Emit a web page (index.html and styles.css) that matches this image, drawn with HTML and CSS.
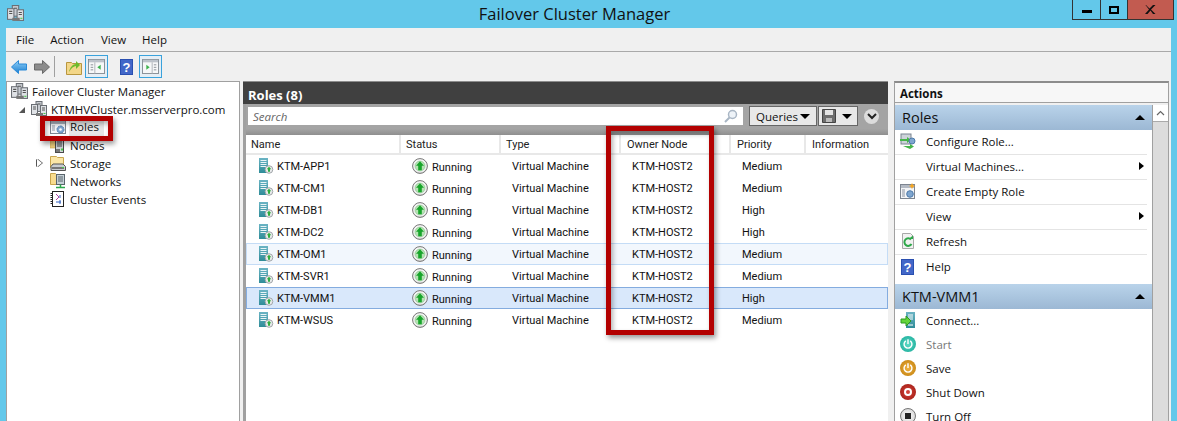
FILE: index.html
```html
<!DOCTYPE html>
<html lang="en">
<head>
<meta charset="utf-8">
<title>Failover Cluster Manager</title>
<link rel="stylesheet" href="styles.css">
</head>
<body>
<svg class="defs" width="0" height="0" aria-hidden="true">
  <defs>
    <linearGradient id="gb" x1="0" y1="0" x2="0" y2="1"><stop offset="0" stop-color="#8fd0f8"/><stop offset="1" stop-color="#1c7fd0"/></linearGradient>
    <linearGradient id="gs" x1="0" y1="0" x2="0" y2="1"><stop offset="0" stop-color="#6bb4c4"/><stop offset="1" stop-color="#2f8c98"/></linearGradient>
    <radialGradient id="gg" cx=".5" cy=".4" r=".7"><stop offset="0" stop-color="#fff"/><stop offset=".7" stop-color="#f2f2f2"/><stop offset="1" stop-color="#a0a0a0"/></radialGradient>
    <symbol id="cluster" viewBox="0 0 16 16">
      <rect x="5" y="0.5" width="6" height="10" fill="#c8ccd2" stroke="#6a6e74"/>
      <rect x="0.5" y="3.5" width="6" height="10" fill="#dfe2e6" stroke="#6a6e74"/>
      <rect x="9.5" y="4.5" width="6" height="10" fill="#dfe2e6" stroke="#6a6e74"/>
      <path d="M2 6h3M2 8h3M11 7h3M11 9h3M6.500 3h3" stroke="#555"/>
      <rect x="5" y="12" width="7" height="3" fill="#777"/>
      <rect x="12.500" y="12" width="2" height="1" fill="#4c4"/>
    </symbol>
    <symbol id="roles" viewBox="0 0 16 16">
      <rect x="0.500" y="1.500" width="15" height="13" fill="#f4f5f7" stroke="#7d8590"/>
      <rect x="1" y="2" width="14" height="3" fill="#aab0ba"/>
      <path d="M2 7h3M2 9h3M2 11h3" stroke="#8a93a0"/>
      <circle cx="10.500" cy="10.500" r="3.500" fill="#7fa6cf" stroke="#4d7aaa" stroke-dasharray="2 .6"/>
      <circle cx="10.500" cy="10.500" r="1.300" fill="#fff"/>
    </symbol>
    <symbol id="nodes" viewBox="0 0 16 16">
      <path d="M0 1h6l1 1h5v9H0z" fill="#f0cf7c" stroke="#c9a64e" stroke-width=".6"/>
      <rect x="5.500" y="2.500" width="8" height="13" fill="#cfd3d8" stroke="#4a4a4a"/>
      <path d="M7 5h5M7 7h5M7 9h5" stroke="#4a4a4a"/>
      <rect x="11" y="11.500" width="2" height="2" fill="#4c4"/>
      <rect x="6" y="12" width="4" height="3" fill="#777"/>
    </symbol>
    <symbol id="storage" viewBox="0 0 16 16">
      <path d="M.5 1.500h6l1 1h6v10H.5z" fill="#fbe6a6" stroke="#c9a64e"/>
      <path d="M3 9h10l2.500 2.500v4H1v-4z" fill="#c8ccd0" stroke="#555"/>
      <rect x="2" y="12" width="12" height="2" fill="#777"/>
      <rect x="12" y="12" width="2" height="1" fill="#4c4"/>
    </symbol>
    <symbol id="networks" viewBox="0 0 16 16">
      <path d="M.5 .5h5l1 1h8v10H.5z" fill="#f8dc8e" stroke="#c9a64e"/>
      <rect x="6.500" y="1.500" width="8" height="10" fill="#c5d0d6" stroke="#59646c"/>
      <path d="M8 4h5M8 6h5M8 8h5" stroke="#59646c"/>
      <path d="M10.500 11.500v3M6 14.500h9" stroke="#2da84c" stroke-width="1.500"/>
    </symbol>
    <symbol id="events" viewBox="0 0 16 16">
      <rect x="2.500" y="0.500" width="11" height="15" fill="#fff" stroke="#222"/>
      <path d="M1.500 2v12" stroke="#222" stroke-dasharray="1 1" stroke-width="2"/>
      <path d="M6 3l3 3-3 3" fill="none" stroke="#b040a0"/>
      <path d="M10 4v3M6 11h5M10 9v4" stroke="#3060c0"/>
    </symbol>
    <symbol id="vm" viewBox="0 0 16 16">
      <rect x="1" y="0" width="9" height="15" fill="url(#gs)"/>
      <path d="M2.500 2.500h6M2.500 4.500h6M2.500 6.500h6M2.500 8.500h6" stroke="#e8f4f6"/>
      <circle cx="11" cy="11.500" r="3.800" fill="#e8eaec" stroke="#a2a6aa"/>
      <path d="M11 8.800l2.300 2.500h-1.300v2.500h-2v-2.500h-1.300z" fill="#2fae3f"/>
    </symbol>
    <symbol id="running" viewBox="0 0 16 16">
      <circle cx="8" cy="8" r="7.400" fill="url(#gg)" stroke="#777"/>
      <circle cx="8" cy="8" r="5" fill="#b6e2b4" stroke="#79b97e" stroke-width=".5"/>
      <path d="M8 3.200L12 7.800H9.800V12.200H6.200V7.800H4z" fill="#18a52b"/>
    </symbol>
    <symbol id="configure" viewBox="0 0 16 16">
      <rect x="1" y="1" width="10" height="10" fill="#cdd3da" stroke="#7a8591"/>
      <path d="M0 6h7V4l4 3-4 3V8H0z" fill="#46b54a"/>
      <path d="M3 13H10V11l4 2.500-4 2.500" fill="#46b54a"/>
      <circle cx="12" cy="8" r="3" fill="#7fa6cf" stroke="#4d7aaa"/>
    </symbol>
    <symbol id="create" viewBox="0 0 16 16">
      <rect x="0.500" y="1.500" width="14" height="14" fill="#f4f5f7" stroke="#7d8590"/>
      <rect x="1" y="2" width="13" height="3" fill="#b4bac4"/>
      <path d="M2 7h3M2 9h3M2 11h3M2 13h3" stroke="#8a93a0"/>
      <circle cx="10" cy="11" r="3.300" fill="#7fa6cf" stroke="#4d7aaa"/>
      <path d="M12 0l1 2 2 1-2 1-1 2-1-2-2-1 2-1z" fill="#f5a623"/>
    </symbol>
    <symbol id="refresh" viewBox="0 0 16 16">
      <path d="M2.500 .5h8l3 3v12h-11z" fill="#f2f2f2" stroke="#a8a8a8"/>
      <path d="M11.500 11A3.800 3.800 0 1 1 11 6.500" fill="none" stroke="#2ea84a" stroke-width="2"/>
      <path d="M8.500 6h4.500v-3.500z" fill="#2ea84a"/>
    </symbol>
    <symbol id="help" viewBox="0 0 14 16">
      <rect width="13" height="16" fill="#2a4fb0"/>
      <rect x="1" y="1" width="11" height="14" fill="#4267c8"/>
      <text x="6.500" y="13" text-anchor="middle" class="helpmark">?</text>
    </symbol>
    <symbol id="connect" viewBox="0 0 16 16">
      <rect x="6" y="0" width="9" height="16" fill="url(#gs)"/>
      <path d="M8 3h5M8 5h5M8 7h5M8 13h5" stroke="#fff"/>
      <path d="M1 7h5V4l5 5-5 5v-3H1z" fill="#63d43a" stroke="#2c9a20"/>
    </symbol>
    <symbol id="power" viewBox="0 0 16 16">
      <path d="M5.500 4.500a4.500 4.500 0 1 0 5 0M8 2.500v5.500" fill="none" stroke="#fff" stroke-width="1.600"/>
    </symbol>
  </defs>
</svg>

<header class="titlebar">
  <svg class="app-icon"><use href="#cluster"/></svg>
  <h1 class="title">Failover Cluster Manager</h1>
  <div class="controls">
    <div class="ctl ctl-min"><span class="min-glyph"></span></div>
    <div class="ctl ctl-max"><span class="max-glyph"></span></div>
    <div class="ctl ctl-close">
      <svg width="11" height="9" viewBox="0 0 11 9"><path d="M1 0l3.500 3.500L8 0h2.500L6 4.500 10.500 9H8L5.500 5.500 2.500 9H0L4 4.500 .5 0z" fill="#111"/></svg>
    </div>
  </div>
</header>

<div class="window">
  <nav class="menubar">
    <span class="menu menu-file">File</span>
    <span class="menu menu-action">Action</span>
    <span class="menu menu-view">View</span>
    <span class="menu">Help</span>
  </nav>

  <div class="toolbar">
    <svg class="tool-arrow" viewBox="0 0 16 14"><path d="M.5 7L7.500.5v3.500h8v6h-8v3.500z" fill="url(#gb)" stroke="#2a8ad8"/></svg>
    <svg class="tool-arrow arrow-gap" viewBox="0 0 16 14"><path d="M15.500 7L8.500.5v3.500h-8v6h8v3.500z" fill="#8c8c8c" stroke="#6a6a6a"/></svg>
    <span class="tool-sep"></span>
    <svg class="tool-up" viewBox="0 0 16 16"><path d="M.5 3.500h5l1 1h9v11H.5z" fill="#f3d688" stroke="#b8963e"/><path d="M3 13C4 8 7 5 10 5V2l4 4-4 4V7C8 7 5 9 3 13z" fill="#6dbb2c"/></svg>
    <span class="tool-btn">
      <svg class="pane" viewBox="0 0 20 18"><rect x=".5" y=".5" width="19" height="17" fill="#f6f7f8" stroke="#7a8088"/><rect x="1" y="1" width="18" height="3" fill="#bcc2ca"/><path d="M3 7h3M3 10h3M3 13h3" stroke="#7a8088"/><path d="M8 4v14" stroke="#a4a8ae"/><path d="M15 7v6l-4-3z" fill="#3fb24f"/></svg>
    </span>
    <svg class="tool-help"><use href="#help"/></svg>
    <span class="tool-btn">
      <svg class="pane" viewBox="0 0 20 18"><rect x=".5" y=".5" width="19" height="17" fill="#f6f7f8" stroke="#7a8088"/><rect x="1" y="1" width="18" height="3" fill="#bcc2ca"/><path d="M14 7h3M14 10h3M14 13h3" stroke="#7a8088"/><path d="M12 4v14" stroke="#a4a8ae"/><path d="M5 7v6l4-3z" fill="#3fb24f"/></svg>
    </span>
  </div>

  <div class="panes">
    <aside class="tree">
      <div class="node level0"><svg class="ticon big"><use href="#cluster"/></svg><span>Failover Cluster Manager</span></div>
      <div class="node level1"><i class="exp exp-open"></i><svg class="ticon"><use href="#cluster"/></svg><span>KTMHVCluster.msserverpro.com</span></div>
      <div class="node level2 node-selected"><svg class="ticon"><use href="#roles"/></svg><span>Roles</span></div>
      <div class="node level2"><svg class="ticon"><use href="#nodes"/></svg><span>Nodes</span></div>
      <div class="node level2 has-exp"><i class="exp exp-closed"></i><svg class="ticon"><use href="#storage"/></svg><span>Storage</span></div>
      <div class="node level2"><svg class="ticon"><use href="#networks"/></svg><span>Networks</span></div>
      <div class="node level2"><svg class="ticon"><use href="#events"/></svg><span>Cluster Events</span></div>
    </aside>

    <main class="center">
      <h2 class="center-title">Roles (8)</h2>
      <div class="filter">
        <div class="search">
          <span class="search-text">Search</span>
          <svg class="lens" viewBox="0 0 14 14"><circle cx="8.500" cy="5.500" r="4" fill="#eef3f8" stroke="#a9b6c4" stroke-width="1.500"/><path d="M5.500 8.500L1 13" stroke="#a9b6c4" stroke-width="2"/></svg>
        </div>
        <div class="fbtn queries">Queries<i class="down"></i></div>
        <div class="fbtn save">
          <svg class="disk" viewBox="0 0 14 14"><path d="M.5.5h13v13H.5z" fill="#6d6d6d" stroke="#444"/><rect x="3" y="1" width="8" height="5" fill="#e4e4e4"/><rect x="4" y="9" width="6" height="4" fill="#bbb"/></svg>
          <i class="down"></i>
        </div>
        <div class="circle"><svg width="10" height="7" viewBox="0 0 10 7"><path d="M1 1l4 4 4-4" fill="none" stroke="#222" stroke-width="2"/></svg></div>
      </div>
      <div class="list">
        <div class="row head">
          <div>Name</div><div>Status</div><div>Type</div><div>Owner Node</div><div>Priority</div><div>Information</div>
        </div>
        <div class="row item"><div class="c-name"><svg class="ricon"><use href="#vm"/></svg>KTM-APP1</div><div class="c-status"><svg class="ricon"><use href="#running"/></svg><span class="run">Running</span></div><div class="c-type">Virtual Machine</div><div class="c-owner">KTM-HOST2</div><div class="c-pri">Medium</div><div></div></div>
        <div class="row item"><div class="c-name"><svg class="ricon"><use href="#vm"/></svg>KTM-CM1</div><div class="c-status"><svg class="ricon"><use href="#running"/></svg><span class="run">Running</span></div><div class="c-type">Virtual Machine</div><div class="c-owner">KTM-HOST2</div><div class="c-pri">Medium</div><div></div></div>
        <div class="row item"><div class="c-name"><svg class="ricon"><use href="#vm"/></svg>KTM-DB1</div><div class="c-status"><svg class="ricon"><use href="#running"/></svg><span class="run">Running</span></div><div class="c-type">Virtual Machine</div><div class="c-owner">KTM-HOST2</div><div class="c-pri">High</div><div></div></div>
        <div class="row item"><div class="c-name"><svg class="ricon"><use href="#vm"/></svg>KTM-DC2</div><div class="c-status"><svg class="ricon"><use href="#running"/></svg><span class="run">Running</span></div><div class="c-type">Virtual Machine</div><div class="c-owner">KTM-HOST2</div><div class="c-pri">High</div><div></div></div>
        <div class="row item hover"><div class="c-name"><svg class="ricon"><use href="#vm"/></svg>KTM-OM1</div><div class="c-status"><svg class="ricon"><use href="#running"/></svg><span class="run">Running</span></div><div class="c-type">Virtual Machine</div><div class="c-owner">KTM-HOST2</div><div class="c-pri">Medium</div><div></div></div>
        <div class="row item"><div class="c-name"><svg class="ricon"><use href="#vm"/></svg>KTM-SVR1</div><div class="c-status"><svg class="ricon"><use href="#running"/></svg><span class="run">Running</span></div><div class="c-type">Virtual Machine</div><div class="c-owner">KTM-HOST2</div><div class="c-pri">Medium</div><div></div></div>
        <div class="row item selected"><div class="c-name"><svg class="ricon"><use href="#vm"/></svg>KTM-VMM1</div><div class="c-status"><svg class="ricon"><use href="#running"/></svg><span class="run">Running</span></div><div class="c-type">Virtual Machine</div><div class="c-owner">KTM-HOST2</div><div class="c-pri">High</div><div></div></div>
        <div class="row item"><div class="c-name"><svg class="ricon"><use href="#vm"/></svg>KTM-WSUS</div><div class="c-status"><svg class="ricon"><use href="#running"/></svg><span class="run">Running</span></div><div class="c-type">Virtual Machine</div><div class="c-owner">KTM-HOST2</div><div class="c-pri">Medium</div><div></div></div>
      </div>
    </main>

    <aside class="actions">
      <h2 class="actions-title">Actions</h2>
      <div class="actions-body">
        <div class="actions-list">
          <section>
            <h3 class="group">Roles<i class="up"></i></h3>
            <div class="act"><svg class="aicon"><use href="#configure"/></svg>Configure Role...</div>
            <div class="act"><span class="aicon"></span>Virtual Machines...<i class="more"></i></div>
            <div class="act"><svg class="aicon"><use href="#create"/></svg>Create Empty Role</div>
            <div class="act"><span class="aicon"></span>View<i class="more"></i></div>
            <div class="act"><svg class="aicon"><use href="#refresh"/></svg>Refresh</div>
            <div class="act act-last"><svg class="aicon"><use href="#help"/></svg>Help</div>
          </section>
          <section>
            <h3 class="group">KTM-VMM1<i class="up"></i></h3>
            <div class="act2"><svg class="aicon"><use href="#connect"/></svg>Connect...</div>
            <div class="act2 disabled"><span class="orb orb-teal"><svg><use href="#power"/></svg></span>Start</div>
            <div class="act2"><span class="orb orb-amber"><svg><use href="#power"/></svg></span>Save</div>
            <div class="act2"><span class="orb orb-red"><span class="orb-ring"></span></span>Shut Down</div>
            <div class="act2"><span class="orb orb-grey"><span class="orb-stop"></span></span>Turn Off</div>
          </section>
        </div>
        <div class="scrollbar"><div class="scroll-up"><svg width="9" height="6" viewBox="0 0 9 6"><path d="M1 5l3.500-3.500L8 5" fill="none" stroke="#666" stroke-width="1.200"/></svg></div></div>
      </div>
    </aside>
  </div>
</div>

<div class="mark mark-roles"></div>
<div class="mark mark-owner"></div>
</body>
</html>
```
FILE: styles.css
```css
* { box-sizing: border-box; }
html, body { margin: 0; height: 421px; overflow: hidden; }
body {
  position: relative;
  background: #63c8ea;
  font-family: "Open Sans", "Noto Sans", sans-serif;
  font-size: 11.5px;
  color: #111;
}
.defs { position: absolute; }
i { display: block; font-style: normal; }
h1, h2, h3 { margin: 0; font-weight: 400; }
svg { display: block; }

.titlebar { height: 28px; display: flex; position: relative; justify-content: center; align-items: flex-start; }
.app-icon { position: absolute; left: 7px; top: 5px; width: 17px; height: 17px; }
.title { font-size: 16.5px; line-height: 27px; color: #111; margin-left: -28px; }
.controls { position: absolute; left: 1072px; top: 0; display: flex; height: 20px; border: 1px solid #333; border-top: 0; }
.ctl { display: flex; align-items: center; justify-content: center; }
.ctl-min { width: 28px; border-right: 1px solid #333; }
.ctl-max { width: 26px; }
.ctl-close { width: 46px; background: #c25b50; border-left: 1px solid #333; }
.min-glyph { width: 10px; height: 3px; background: #000; margin-top: 3px; }
.max-glyph { width: 10px; height: 8px; border: 2px solid #000; }

.window { margin: 0 6px; height: 393px; background: #f0f0f0; display: flex; flex-direction: column; }
.menubar { height: 24px; display: flex; align-items: center; padding-left: 10px; border-bottom: 1px solid #a9a9a9; background: #f0f0f0; font-size: 11.5px; }
.menu-file { margin-right: 16px; }
.menu-action { margin-right: 17px; }
.menu-view { margin-right: 16px; }

.toolbar { height: 29px; display: flex; align-items: center; padding-left: 5px; }
.tool-arrow { width: 16px; height: 14px; }
.arrow-gap { margin-left: 7px; }
.tool-sep { width: 1px; height: 21px; background: #a0a0a0; margin: 0 11px 0 4px; }
.tool-up { width: 16px; height: 16px; margin-right: 3px; }
.tool-btn { width: 23px; height: 23px; border: 1px solid #3aa2dc; background: #e5eef5; display: flex; align-items: center; justify-content: center; }
.pane { width: 17px; height: 15px; }
.tool-help { width: 14px; height: 16px; margin: 0 5px 0 12px; }
.helpmark { font: 700 13px "Liberation Sans", sans-serif; fill: #fff; }

.panes { flex: 1; min-height: 0; display: flex; }

.tree { width: 234px; background: #fff; border: 1px solid #a0a0a0; border-bottom: 0; }
.node { height: 18px; display: flex; align-items: center; white-space: nowrap; }
.level0 { padding-left: 4px; }
.level1 { padding-left: 12px; }
.level2 { padding-left: 43px; }
.has-exp { padding-left: 30px; }
.ticon { width: 16px; height: 16px; margin-right: 4px; flex: none; }
.ticon.big { width: 17px; height: 17px; margin-right: 4px; }
.exp { flex: none; width: 6px; height: 8px; margin-right: 7px; }
.exp-open { width: 0; height: 0; margin: 2px 6px 0 0; border-style: solid; border-width: 0 0 6px 6px; border-color: transparent transparent #555; }
.exp-closed { width: 0; height: 0; margin: 0 8px 0 0; border-left: 5px solid #fff; border-top: 4px solid transparent; border-bottom: 4px solid transparent; filter: drop-shadow(1px 0 0 #555) drop-shadow(-1px 0 0 #555); }
.node-selected span { background: #e6e6e6; padding: 0 5px 0 1px; line-height: 18px; margin-left: -1px; }

.center { margin-left: 3px; width: 645px; background: #a0a0a0; border-top: 1px solid #8c8c8c; padding: 0 0 0 3px; display: flex; flex-direction: column; flex: none; }
.center-title { background: #404040; color: #fff; font-size: 13px; font-weight: 700; height: 22px; margin-left: -3px; padding: 3px 0 0 5px; line-height: 20px; }
.filter { height: 31px; background: linear-gradient(#a4a4a4, #a4a4a4 80%, #8f8f8f); display: flex; align-items: flex-start; padding: 3px 0 0 2px; }
.search { width: 495px; height: 18px; background: #fff; display: flex; align-items: center; justify-content: space-between; padding: 0 5px; }
.search-text { font-style: italic; color: #666; }
.lens { width: 14px; height: 14px; }
.fbtn { height: 20px; border: 1px solid #666; background: #e8e8e8; display: flex; align-items: center; margin-top: -1px; }
.queries { width: 68px; margin-left: 6px; padding-left: 6px; justify-content: space-between; padding-right: 6px; }
.save { width: 40px; margin-left: 1px; padding: 0 5px 0 3px; justify-content: space-between; }
.disk { width: 14px; height: 14px; }
.down { width: 0; height: 0; border-left: 5px solid transparent; border-right: 5px solid transparent; border-top: 5px solid #000; }
.circle { width: 15px; height: 15px; border-radius: 50%; background: #dcdcdc; margin: 2px 0 0 6px; display: flex; align-items: center; justify-content: center; }

.list { flex: 1; background: #fff; font-family: Roboto, "Open Sans", sans-serif; font-size: 11px; }
.row {
  display: grid;
  grid-template-columns: 155px 100px 120px 110px 75px 1fr;
  height: 22px;
  align-items: center;
  white-space: nowrap;
}
.head { height: 20px; border-bottom: 2px solid #e8e8e8; color: #222; }
.head > div { padding-left: 5px; border-right: 2px solid #e8e8e8; height: 18px; line-height: 20px; }
.head > div:nth-child(n+4) { padding-left: 6px; }
.head > div:last-child { border-right: 0; }
.item { border: 1px solid transparent; }
.hover { background: #f2f7fd; border-color: #c4dcf6; }
.selected { background: #d9e8fb; border-color: #84acdf; }
.c-name { display: flex; align-items: center; padding-left: 11px; }
.ricon { width: 16px; height: 16px; flex: none; margin-right: 4px; }
.c-name .ricon { margin-right: 3px; }
.c-status { display: flex; align-items: center; padding-left: 10px; }
.run { padding-top: 2px; }
.c-type { padding-left: 10px; }
.c-owner { padding-left: 10px; }
.c-pri { padding-left: 10px; }

.actions { margin: 0 2px 0 6px; flex: 1; min-width: 0; display: flex; flex-direction: column; border-top: 2px solid #8c8c8c; border-left: 1px solid #a0a0a0; border-right: 1px solid #a0a0a0; }
.actions-title { font-size: 11.5px; font-weight: 700; height: 20px; line-height: 21px; padding-left: 5px; background: #f7f7f7; border-bottom: 1px solid #a0a0a0; margin-bottom: 2px; }
.actions-body { flex: 1; min-height: 0; display: flex; background: #fff; }
.actions-list { flex: 1; min-width: 0; overflow: hidden; }
.group { height: 25px; display: flex; align-items: center; justify-content: space-between; padding: 0 7px 0 7px; background: linear-gradient(#b9d3ea, #9cb8d4); font-size: 14.5px; color: #111; }
.up { width: 0; height: 0; border-left: 5px solid transparent; border-right: 5px solid transparent; border-bottom: 5px solid #000; }
.act, .act2 { display: flex; align-items: center; padding-left: 5px; position: relative; white-space: nowrap; padding-bottom: 2px; }
.act { height: 25px; margin-right: 5px; border-bottom: 1px solid #e4e4e4; }
.act-last { border-bottom: 0; margin-bottom: 4px; }
.act2 { height: 24px; }
.aicon { width: 16px; height: 16px; flex: none; margin-right: 10px; }
.more { position: absolute; right: 3px; width: 0; height: 0; border-left: 5px solid #000; border-top: 4px solid transparent; border-bottom: 4px solid transparent; }
.disabled { color: #777; }
.orb { width: 16px; height: 16px; border-radius: 50%; flex: none; margin-right: 10px; display: flex; align-items: center; justify-content: center; }
.orb svg { width: 14px; height: 14px; }
.orb-teal { background: radial-gradient(#5fdcc8, #10a593); }
.orb-amber { background: radial-gradient(#f2b340, #bb7a08); }
.orb-red { background: radial-gradient(#d8453b, #98160f); }
.orb-grey { background: radial-gradient(#fff, #ccc); border: 1px solid #777; }
.orb-ring { width: 8px; height: 8px; border: 2px solid #fff; border-radius: 50%; }
.orb-stop { width: 6px; height: 6px; background: #222; }
.scrollbar { width: 16px; flex: none; background: #dcdcdc; border-left: 1px solid #a0a0a0; }
.scroll-up { height: 17px; background: #fff; display: flex; align-items: center; justify-content: center; border-bottom: 1px solid #aaa; }

.mark { position: absolute; border: 5px solid #b30000; box-shadow: 2px 3px 5px rgba(0,0,0,.4), inset 2px 3px 5px rgba(0,0,0,.3); }
.mark-roles { left: 40px; top: 116px; width: 73px; height: 25px; }
.mark-owner { left: 606px; top: 126px; width: 108px; height: 209px; }
```
